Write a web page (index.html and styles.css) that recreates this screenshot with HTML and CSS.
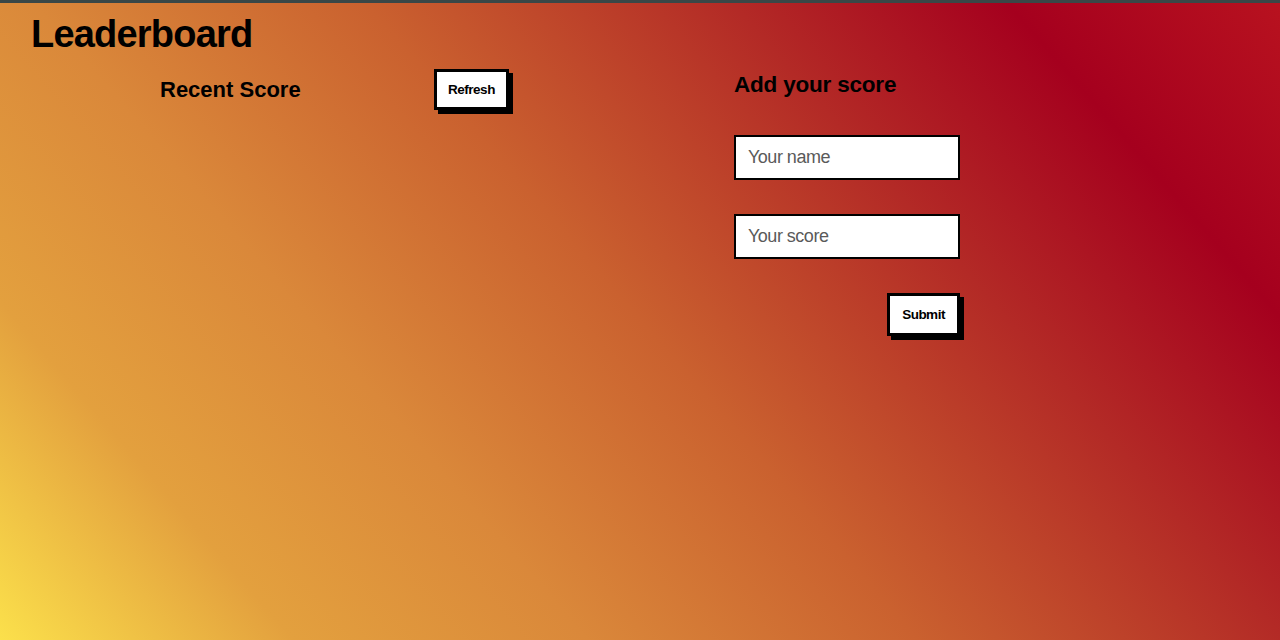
FILE: index.html
```html
<!DOCTYPE html>
<html lang="en">
<head>
<meta charset="utf-8">
<title>Leaderboard</title>
<link rel="stylesheet" href="styles.css">
</head>
<body>
<header class="top">
  <h1 class="title">Leaderboard</h1>
</header>
<main class="board">
  <section class="recent">
    <h2 class="recent-title">Recent Score</h2>
    <button class="btn" type="button">Refresh</button>
  </section>
  <section class="add">
    <h2 class="add-title">Add your score</h2>
    <form class="score-form">
      <input class="field" type="text" placeholder="Your name">
      <input class="field" type="text" placeholder="Your score">
      <div class="actions">
        <button class="btn btn-submit" type="button">Submit</button>
      </div>
    </form>
  </section>
</main>
</body>
</html>
```
FILE: styles.css
```css
html, body {
  margin: 0;
  padding: 0;
  height: 100%;
}
body {
  border-top: 3px solid #3a4747;
  box-sizing: border-box;
  min-height: 640px;
  font-family: "Liberation Sans", Arial, sans-serif;
  color: #000;
  background: linear-gradient(49deg,
    #fbe04b 0%,
    #e3a03e 16%,
    #da883a 32%,
    #ca612f 50%,
    #b32a26 70%,
    #a5001e 85%,
    #b8121f 100%);
}
.top {
  padding: 9px 0 0 31px;
}
.title {
  margin: 0;
  font-size: 38px;
  line-height: 44px;
  font-weight: bold;
  letter-spacing: -0.8px;
}
.board {
  display: flex;
  align-items: flex-start;
  padding-left: 160px;
  margin-top: 13px;
}
.recent {
  display: flex;
  justify-content: space-between;
  align-items: flex-start;
  width: 349px;
}
.recent-title {
  margin: 8px 0 0;
  font-size: 22px;
  line-height: 26px;
  font-weight: bold;
}
.add {
  margin-left: 225px;
  width: 226px;
}
.add-title {
  margin: 2px 0 0;
  font-size: 22.5px;
  line-height: 28px;
  font-weight: bold;
  letter-spacing: -0.2px;
}
.score-form {
  display: flex;
  flex-direction: column;
  gap: 34px;
  margin-top: 36px;
}
.field {
  box-sizing: border-box;
  width: 226px;
  height: 45px;
  margin: 0;
  border: 2px solid #000;
  background: #fff;
  padding: 0 12px;
  font-family: "Liberation Sans", Arial, sans-serif;
  font-size: 18px;
  letter-spacing: -0.5px;
  outline: none;
}
.field::placeholder {
  color: #5a5a5a;
}
.actions {
  display: flex;
  justify-content: flex-end;
}
.btn {
  box-sizing: border-box;
  width: 75px;
  height: 41px;
  margin: 0;
  padding: 0;
  border: 3px solid #000;
  background: #fff;
  box-shadow: 4px 4px 0 #000;
  font-family: "Liberation Sans", Arial, sans-serif;
  font-size: 13.5px;
  font-weight: bold;
  letter-spacing: -0.5px;
  color: #000;
  cursor: pointer;
}
.btn-submit {
  width: 73px;
  height: 43px;
}
```
